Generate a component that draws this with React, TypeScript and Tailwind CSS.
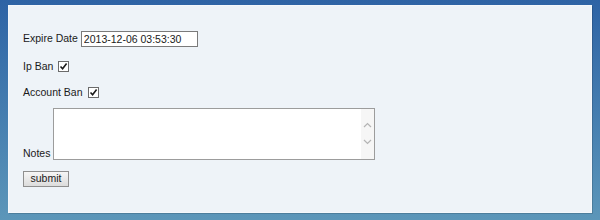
import React from "react";

function Check() {
  return (
    <span className="inline-flex h-[11px] w-[11px] items-center justify-center border border-[#6b6b6b] bg-white">
      <svg width="9" height="9" viewBox="0 0 9 9">
        <path d="M1.5 4.5 L3.6 6.8 L7.6 1.6" fill="none" stroke="#1a1a1a" strokeWidth="1.6" />
      </svg>
    </span>
  );
}

export default function App() {
  return (
    <div
      className="h-[220px] w-[600px] overflow-hidden bg-gradient-to-b from-[#2e63a5] to-[#5c96b9] px-[8px] pt-[5px] text-[10.5px] text-[#1a1a1a]"
      style={{ fontFamily: '"Liberation Sans", Arial, sans-serif' }}
    >
      <div className="flex h-[208px] flex-col border border-[#f4f7fb] bg-[#eef3f8] pl-[14px] pt-[25px] shadow-[1px_1px_0_rgba(0,0,0,0.15)]">
        <div className="flex h-[16px] items-center gap-[3px]">
          <span>Expire Date</span>
          <input
            defaultValue="2013-12-06 03:53:30"
            className="h-[16px] w-[117px] border border-[#7a7a7a] bg-white px-[2px] text-[10.5px] leading-[14px] text-[#1a1a1a] outline-none"
            style={{ fontFamily: '"Liberation Sans", Arial, sans-serif' }}
          />
        </div>
        <div className="mt-[14px] flex h-[11px] items-center gap-[5px]">
          <span>Ip Ban</span>
          <Check />
        </div>
        <div className="mt-[15px] flex h-[11px] items-center gap-[5px]">
          <span>Account Ban</span>
          <Check />
        </div>
        <div className="mt-[10px] flex items-end gap-[3px]">
          <span className="leading-[13px]">Notes</span>
          <div className="flex h-[52px] w-[322px] border border-[#9c9c9c] bg-white">
            <textarea className="h-full flex-1 resize-none bg-white outline-none" />
            <div className="flex w-[13px] flex-col items-center bg-[#f6f6f6] pt-[13px]">
              <svg width="9" height="6" viewBox="0 0 9 6">
                <path d="M1 5 L4.5 1.5 L8 5" fill="none" stroke="#b4b4b4" strokeWidth="1.2" />
              </svg>
              <svg className="mt-[11px]" width="9" height="6" viewBox="0 0 9 6">
                <path d="M1 1 L4.5 4.5 L8 1" fill="none" stroke="#b4b4b4" strokeWidth="1.2" />
              </svg>
            </div>
          </div>
        </div>
        <div className="mt-[11px]">
          <button
            className="flex h-[16px] w-[46px] items-center justify-center border border-[#8f8f8f] bg-gradient-to-b from-[#f6f6f6] to-[#dcdcdc] text-[10.5px] text-[#1a1a1a]"
            style={{ fontFamily: '"Liberation Sans", Arial, sans-serif' }}
          >
            submit
          </button>
        </div>
      </div>
    </div>
  );
}
